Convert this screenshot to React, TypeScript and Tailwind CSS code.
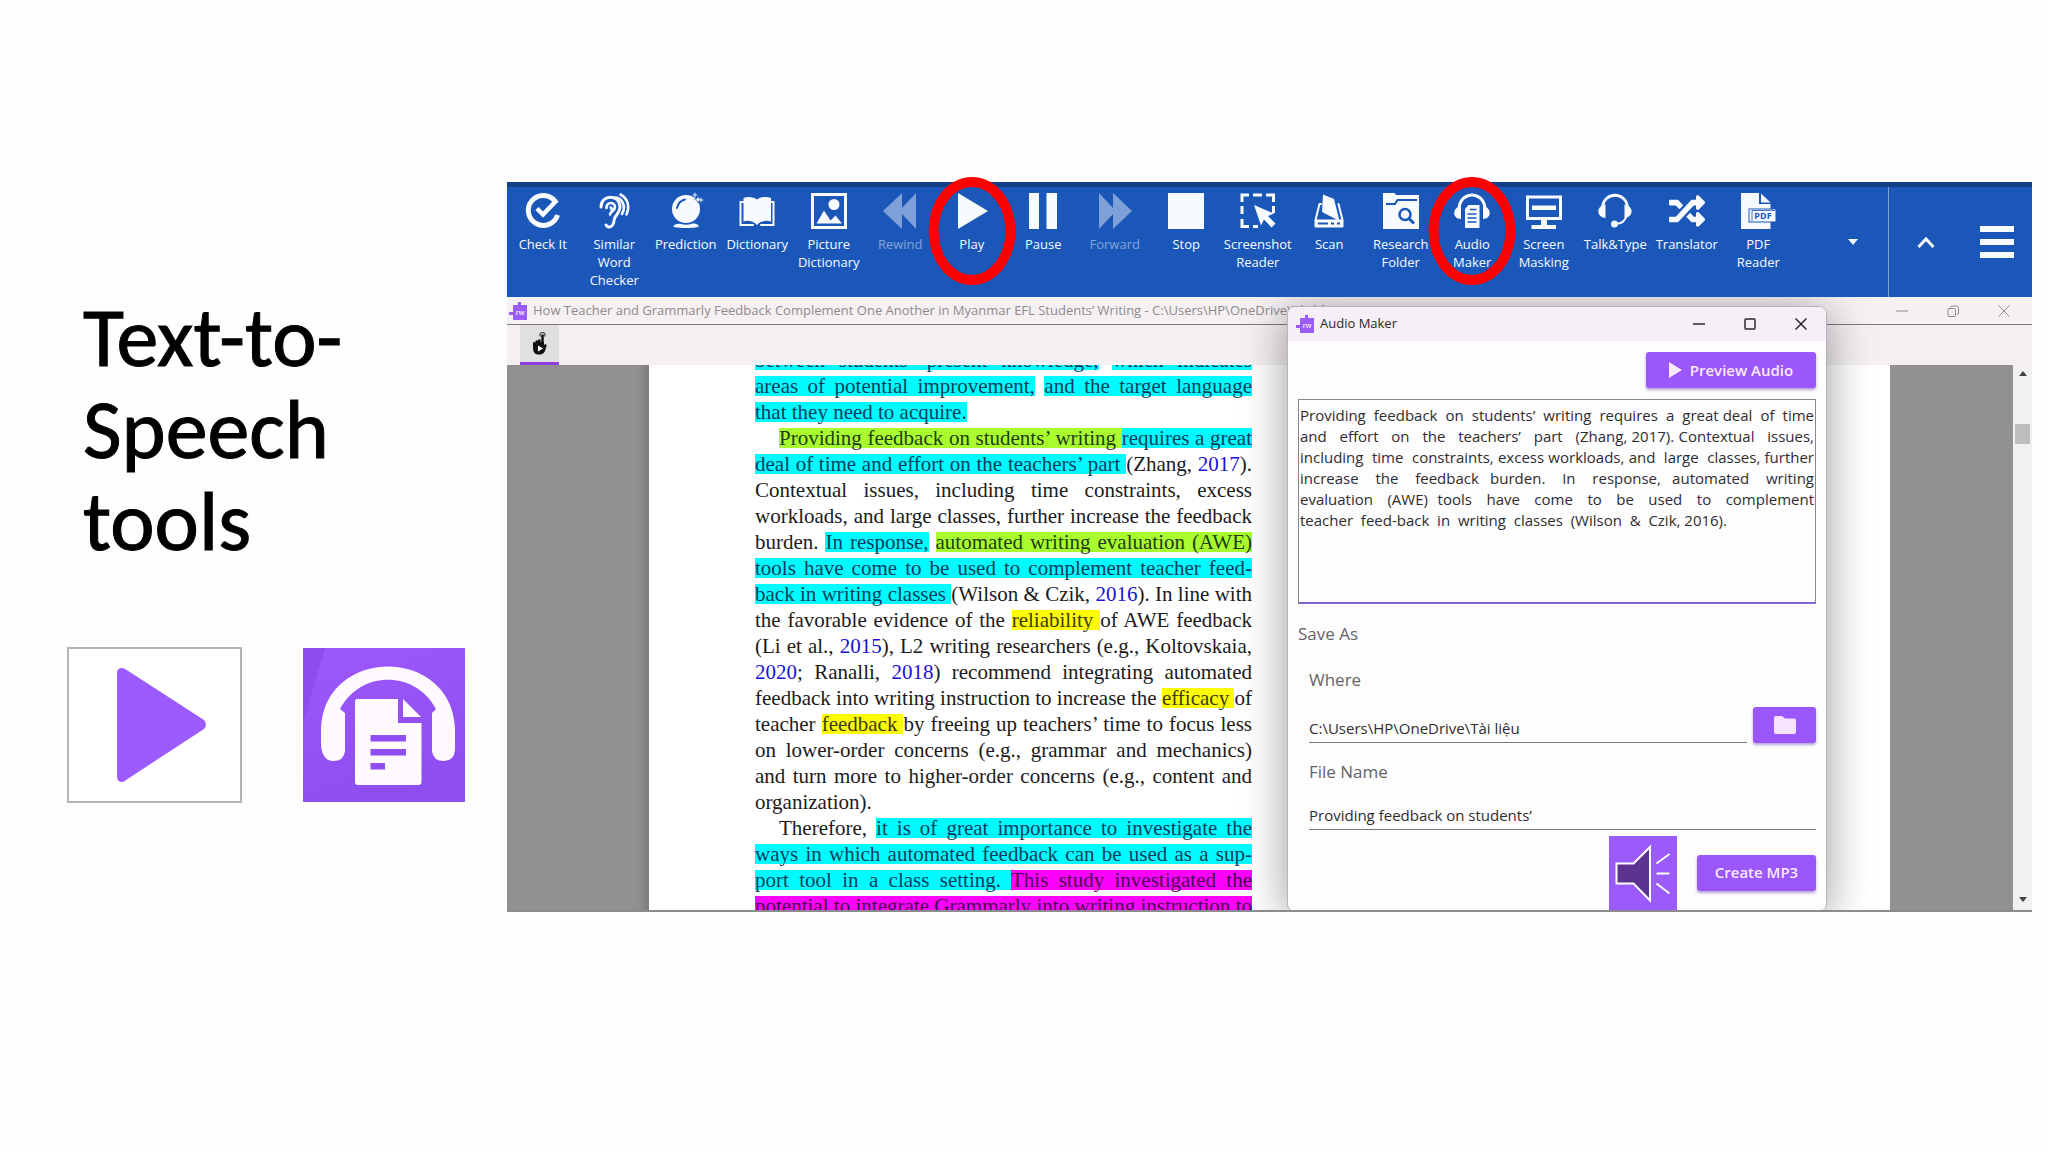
import React from "react";
import { FaRandom } from "react-icons/fa";

const BLUE = "#1b57b9";

function Svg({ children }: { children: React.ReactNode }) {
  return (
    <svg viewBox="0 0 36 36" className="size-9 shrink-0 overflow-visible" fill="#f7fbff" aria-hidden="true">
      {children}
    </svg>
  );
}

const line = { fill: "none", stroke: "#f7fbff", strokeLinecap: "round" as const, strokeLinejoin: "round" as const };

type Tool = { label: string; icon: React.ReactNode; dim?: boolean; ring?: boolean };

const tools: Tool[] = [
  {
    label: "Check\u00a0It",
    icon: (
      <Svg>
        <path d="M30 8A15 15 0 1 0 32.6 22" {...line} strokeLinecap="butt" strokeWidth={5} />
        <path d="M12 15.500l6 6L32 7" {...line} strokeLinecap="butt" strokeLinejoin="miter" strokeWidth={4.500} />
      </Svg>
    ),
  },
  {
    label: "Similar Word Checker",
    icon: (
      <Svg>
        <path d="M5 14C5 1 24 1 24 14C24 21 18.500 21.500 18 27.500C17.500 34.500 12 35.500 10 32" {...line} strokeWidth={3} />
        <path d="M10.500 15C10 8.500 19 8.500 19 14C19 18.500 14.500 17.500 14 21.500M14.500 14.500c1 0 1.500 1 1 2" {...line} strokeWidth={2.600} />
        <path d="M19 4.500C27 5 30 14 26 21M24.500 1.500C33 6 33.500 15 30.500 21.500" {...line} strokeWidth={2.600} />
      </Svg>
    ),
  },
  {
    label: "Prediction",
    icon: (
      <Svg>
        <circle cx="18" cy="16" r="14" />
        <path d="M9 15C10 10 13 7.500 17 6.500" fill="none" stroke={BLUE} strokeWidth={2} strokeLinecap="round" />
        <path d="M5 33.500c2-3 6-3 8-2.500c3 1 7 1 10 0c3-1 7-.5 8 2.500c-4 2-22 2-26 0z" />
        <path d="M30 3l1 2.500l2.500 1l-2.500 1L30 10l-1-2.500l-2.500-1l2.500-1z" stroke={BLUE} strokeWidth={0.500} />
        <path d="M27 0v4M25 2h4M33 5v4M31 7h4" {...line} strokeWidth={0.900} />
      </Svg>
    ),
  },
  {
    label: "Dictionary",
    icon: (
      <Svg>
        <path d="M5 9H1.500V32H14M31 9H34.500V32H22" {...line} strokeLinejoin="miter" strokeWidth={2} />
        <path d="M4.500 5C9 3 15 4 18 6.500C21 4 27 3 32 5V28.500C27 27 22 28 18 32C14 28 9 27 4.500 28.500z" />
      </Svg>
    ),
  },
  {
    label: "Picture Dictionary",
    icon: (
      <Svg>
        <rect x="1.500" y="1.500" width="33" height="33" {...line} strokeLinejoin="miter" strokeWidth={3} />
        <circle cx="23" cy="11.500" r="5.500" />
        <path d="M5.500 30.500L13 17.500L19.500 27.500L24.500 22.500L31 30.500z" />
      </Svg>
    ),
  },
  { label: "Rewind", dim: true, icon: <Svg><path d="M1 18L20 0V15L34 0V36L20 21V36z" /></Svg> },
  { label: "Play", ring: true, icon: <Svg><path d="M4 0L34 18L4 36z" /></Svg> },
  { label: "Pause", icon: <Svg><path d="M4 0h10v36H4zM21.500 0h10.500v36H21.500z" /></Svg> },
  { label: "Forward", dim: true, icon: <Svg><path d="M35 18L16 0V15L2 0V36L16 21V36z" /></Svg> },
  { label: "Stop", icon: <Svg><path d="M0 0h36v36H0z" /></Svg> },
  {
    label: "Screenshot Reader",
    icon: (
      <Svg>
        <path d="M2 9V2H9M26 2h7.500V9M2 26v7.500H9M13 2h9M2 13v8M33.500 13v7M13 33.500h5" {...line} strokeLinecap="butt" strokeLinejoin="miter" strokeWidth={3} />
        <path d="M14 12L34 20.500L28 23L35.500 30.500L31.500 34.500L24 26.500L21 32.500z" />
      </Svg>
    ),
  },
  {
    label: "Scan",
    icon: (
      <Svg>
        <path d="M12 1.500L23 6L28.500 28L11 19z" />
        <path d="M10 11H8.500L4.500 27v6.500H31.500V27L27.500 11" {...line} strokeWidth={2} />
        <path d="M4.500 26.500H31.500V34H4.500z" />
        <path d="M7 30.500H17M20 30.500h3M26 30.500h3" stroke={BLUE} strokeWidth={2} />
      </Svg>
    ),
  },
  {
    label: "Research Folder",
    icon: (
      <Svg>
        <path d="M0 0H11.500L13 2H36V36H0z" />
        <path d="M3 11H12L14.500 7H34" fill="none" stroke={BLUE} strokeWidth={2} />
        <circle cx="22" cy="21.500" r="5.500" fill="none" stroke={BLUE} strokeWidth={2.500} />
        <path d="M26 25.500L31 30.500" stroke={BLUE} strokeWidth={3} />
      </Svg>
    ),
  },
  {
    label: "Audio Maker",
    ring: true,
    icon: (
      <Svg>
        <path d="M5 15C7 -2.500 29 -2.500 31 15" {...line} strokeWidth={3} />
        <path d="M7 13.500V26C-2 26 -2 14 7 13.500zM29 13.500V26C38 26 38 14 29 13.500z" />
        <path d="M14.500 12H25.500V35H11V16z" />
        <path d="M16 16.500h6.500M13.500 21h9M13.500 25h9M13.500 29h9" stroke={BLUE} strokeWidth={1.600} />
      </Svg>
    ),
  },
  {
    label: "Screen Masking",
    icon: (
      <Svg>
        <rect x="1.500" y="4" width="33" height="21.500" {...line} strokeLinejoin="miter" strokeWidth={3} />
        <path d="M6 12.500H30V17H6zM15 26h6v6h9v4H5.500v-4H15z" />
      </Svg>
    ),
  },
  {
    label: "Talk&Type",
    icon: (
      <Svg>
        <path d="M5.500 15C6 -2 30 -2 30.500 15" {...line} strokeWidth={2.800} />
        <path d="M8.500 11.500V25C-1 24 -1 13 8.500 11.500zM27.500 11.500V25C37 24 37 13 27.500 11.500z" />
        <path d="M29 24C28 28 25 30.500 19 30.800" {...line} strokeWidth={2} />
        <circle cx="17.500" cy="31" r="3.500" />
      </Svg>
    ),
  },
  { label: "Translator", icon: <FaRandom className="size-9 shrink-0" aria-hidden="true" /> },
  {
    label: "PDF Reader",
    icon: (
      <Svg>
        <path d="M1 0H19V11H30.500V36H1z" />
        <path d="M21 0.500L30.500 9.500H21z" />
        <rect x="8.500" y="15.500" width="27.500" height="14" fill={BLUE} />
        <rect x="9.500" y="16.500" width="26" height="12" fill="#f7fbff" />
        <path d="M12 28V17.500H35" fill="none" stroke={BLUE} strokeWidth={0.800} />
        <text x="23" y="26" fontSize="9" fontWeight="700" textAnchor="middle" fill={BLUE} fontFamily="Open Sans, sans-serif">
          PDF
        </text>
      </Svg>
    ),
  },
];

function Toolbar() {
  return (
    <nav aria-label="Reading tools" className="flex h-[115px] border-t-[5px] border-[#123f86] bg-[#1b57b9] text-[#f7fbff]">
      <div className="flex flex-1">
        {tools.map((t) => (
          <button
            key={t.label}
            type="button"
            className={
              "relative flex flex-1 basis-0 flex-col items-center gap-1.5 pt-1.5 text-[13px] leading-[18px] " +
              (t.dim ? "*:opacity-45" : "")
            }
          >
            {t.icon}
            <span className="w-min">{t.label}</span>
            {t.ring && (
              <span className="absolute -top-2.5 left-1/2 h-[108px] w-[87px] -translate-x-1/2 rounded-[50%] border-10 border-[#fe0000]" />
            )}
          </button>
        ))}
      </div>
      <button type="button" aria-label="More tools" className="flex w-[94px] items-center justify-center pl-6">
        <svg viewBox="0 0 10 6" className="h-1.5 w-2.5" fill="currentColor"><path d="M0 0h10L5 6z" /></svg>
      </button>
      <div className="flex w-36 items-center border-l border-[#7d9fd8] pr-[18px] pl-7">
        <button type="button" aria-label="Collapse toolbar">
          <svg viewBox="0 0 18 12" className="h-3 w-[18px]" fill="none" stroke="currentColor" strokeWidth={3}><path d="M1.500 11L9 3L16.500 11" /></svg>
        </button>
        <button type="button" aria-label="Menu" className="ml-auto flex w-[34px] flex-col gap-[7px]">
          <span className="h-1.5 w-full bg-current" />
          <span className="h-1.5 w-full bg-current" />
          <span className="h-1.5 w-full bg-current" />
        </button>
      </div>
    </nav>
  );
}

function AppMark() {
  return (
    <svg viewBox="0 0 18 18" className="size-[18px] shrink-0" fill="#9a5cf5" aria-hidden="true">
      <path d="M4 3h5V0h3v3h6v15H4v-5H0v-3h4z" />
      <text x="11" y="13" fontSize="7" fontWeight="700" textAnchor="middle" fill="#e9d8ff" fontFamily="Open Sans, sans-serif">rw</text>
    </svg>
  );
}

function WindowButtons({ restored }: { restored?: boolean }) {
  const s = { fill: "none", stroke: "currentColor", strokeWidth: restored ? 1 : 1.5 };
  return (
    <div className="ml-auto flex gap-[39px]">
      <button type="button" aria-label="Minimize"><svg viewBox="0 0 12 12" className="size-3" {...s}><path d="M0 6h12" /></svg></button>
      <button type="button" aria-label="Maximize">
        <svg viewBox="0 0 12 12" className="size-3" {...s}>
          {restored ? (
            <path d="M1 4.500a1 1 0 0 1 1-1h5.500a1 1 0 0 1 1 1V10.500a1 1 0 0 1-1 1H2a1 1 0 0 1-1-1zM3.500 2.500a2 2 0 0 1 1.500-1.500h4.500a2 2 0 0 1 2 2V8a2 2 0 0 1-1.500 1.500" />
          ) : (
            <rect x="1" y="1" width="10" height="10" rx="1" />
          )}
        </svg>
      </button>
      <button type="button" aria-label="Close"><svg viewBox="0 0 12 12" className="size-3" {...s}><path d="M0.500 0.500l11 11M11.500 0.500l-11 11" /></svg></button>
    </div>
  );
}

const mark = "bg-transparent bg-no-repeat bg-[length:100%_20px] bg-[position:0_2px] ";
function C({ children }: { children: React.ReactNode }) {
  return <mark className={mark + "bg-[linear-gradient(#00fbff,#00fbff)] text-[#043e5c]"}>{children}</mark>;
}
function G({ children }: { children: React.ReactNode }) {
  return <mark className={mark + "bg-[linear-gradient(#a9fd2e,#a9fd2e)] text-[#1e3d12]"}>{children}</mark>;
}
function Y({ children }: { children: React.ReactNode }) {
  return <mark className={mark + "bg-[linear-gradient(#fdfc05,#fdfc05)] text-[#3d3b10]"}>{children}</mark>;
}
function M({ children }: { children: React.ReactNode }) {
  return <mark className={mark + "bg-[linear-gradient(#fb02fb,#fb02fb)] text-[#4c0452]"}>{children}</mark>;
}
function A({ children }: { children: React.ReactNode }) {
  return <a href="#ref" className="text-[#1a10d8]">{children}</a>;
}

const rows: { t: React.ReactNode; indent?: boolean; end?: boolean }[] = [
  { t: <><C>between students’ present knowledge,</C> <C>which indicates</C></> },
  { t: <><C>areas of potential improvement,</C> <C>and the target language</C></> },
  { t: <C>that they need to acquire.</C>, end: true },
  { t: <><G>Providing feedback on students’ writing </G><C>requires a great</C></>, indent: true },
  { t: <><C>deal of time and effort on the teachers’ part </C>(Zhang, <A>2017</A>).</> },
  { t: "Contextual issues, including time constraints, excess" },
  { t: "workloads, and large classes, further increase the feedback" },
  { t: <>burden. <C>In response,</C> <G>automated writing evaluation (AWE)</G></> },
  { t: <C>tools have come to be used to complement teacher feed-</C> },
  { t: <><C>back in writing classes </C>(Wilson &amp; Czik, <A>2016</A>). In line with</> },
  { t: <>the favorable evidence of the <Y>reliability </Y>of AWE feedback</> },
  { t: <>(Li et al., <A>2015</A>), L2 writing researchers (e.g., Koltovskaia,</> },
  { t: <><A>2020</A>; Ranalli, <A>2018</A>) recommend integrating automated</> },
  { t: <>feedback into writing instruction to increase the <Y>efficacy </Y>of</> },
  { t: <>teacher <Y>feedback </Y>by freeing up teachers’ time to focus less</> },
  { t: "on lower-order concerns (e.g., grammar and mechanics)" },
  { t: "and turn more to higher-order concerns (e.g., content and" },
  { t: "organization).", end: true },
  { t: <>Therefore, <C>it is of great importance to investigate the</C></>, indent: true },
  { t: <C>ways in which automated feedback can be used as a sup-</C> },
  { t: <><C>port tool in a class setting. </C><M>This study investigated the</M></> },
  { t: <M>potential to integrate Grammarly into writing instruction to</M> },
];

function Article() {
  return (
    <div className="flex h-[545px] overflow-hidden bg-[#929092]">
      <div className="w-[142px] shrink-0 bg-linear-to-l from-[#7c7a7c] to-[#929092] to-8%" />
      <article className="flex-1 bg-white pl-[106px] font-['Liberation_Serif',serif] text-[21px] leading-[26px] text-[#1c1a1c]">
        <div className="-mt-[18px] w-[497px]">
          {rows.map((r, i) => (
            <p
              key={i}
              className={
                "whitespace-nowrap " + (r.end ? "text-left " : "text-justify [text-align-last:justify] ") + (r.indent ? "pl-6" : "")
              }
            >
              {r.t}
            </p>
          ))}
        </div>
      </article>
      <div className="w-[123px] shrink-0" />
      <div className="flex w-[19px] shrink-0 flex-col items-center bg-[#f3f0f3] py-1 text-[#444]">
        <svg viewBox="0 0 8 5" className="mt-0.5 h-[5px] w-2" fill="currentColor"><path d="M0 5h8L4 0z" /></svg>
        <span className="mt-12 h-5 w-[15px] bg-[#bfbcbf]" />
        <svg viewBox="0 0 8 5" className="mt-auto mb-1 h-[5px] w-2" fill="currentColor"><path d="M0 0h8L4 5z" /></svg>
      </div>
    </div>
  );
}

const audioText =
  "Providing  feedback  on  students’  writing  requires  a  great deal  of  time " +
  "and   effort   on   the   teachers’   part   (Zhang, 2017). Contextual   issues, " +
  "including  time  constraints, excess workloads, and  large  classes, further " +
  "increase   the   feedback  burden.   In   response,  automated   writing " +
  "evaluation   (AWE)  tools   have   come   to   be   used   to   complement " +
  "teacher  feed-back  in  writing  classes  (Wilson  &  Czik, 2016).";

const purpleButton = "flex h-9 items-center justify-center rounded-[3px] bg-[#9b57fb] font-semibold text-[#fbeaff] shadow-[0_2px_3px_rgba(90,50,160,0.45)] ";

function AudioDialog() {
  return (
    <section
      role="dialog"
      aria-label="Audio Maker"
      className="absolute top-[9px] right-[205px] w-[540px] overflow-hidden rounded-lg border border-[#b9b4ba] bg-[#fefdfe] shadow-[0_6px_45px_rgba(0,0,0,0.4)]"
    >
      <header className="flex h-[34px] items-center gap-1.5 bg-[#f7eff8] pr-[19px] pl-2 text-[13px] text-[#2a262b]">
        <AppMark />
        <h2>Audio Maker</h2>
        <WindowButtons />
      </header>
      <div className="flex flex-col px-2.5">
        <button type="button" className={purpleButton + "mt-[11px] w-[170px] gap-2 self-end text-[15px]"}>
          <svg viewBox="0 0 13 16" className="h-4 w-[13px]" fill="currentColor" aria-hidden="true"><path d="M0 0L13 8L0 16z" /></svg>
          Preview Audio
        </button>
        <textarea
          aria-label="Text to convert"
          defaultValue={audioText}
          className="mt-[11px] block h-[205px] w-full resize-none overflow-hidden border border-b-2 border-[#8a868c] border-b-[#8366cf] bg-transparent px-px pt-[5px] text-justify text-[15px] leading-[21px] text-[#2f2c30] outline-none"
        />
        <h3 className="mt-[18px] text-[17px] leading-6 text-[#666267]">Save As</h3>
        <div className="mt-[22px] flex flex-col pl-[11px]">
          <label htmlFor="where" className="text-[17px] leading-6 text-[#666267]">Where</label>
          <div className="mt-[15px] flex items-start gap-1.5">
            <input
              id="where"
              defaultValue={"C:\\Users\\HP\\OneDrive\\Tài liệu"}
              className="h-9 min-w-0 flex-1 border-b border-[#77737a] bg-transparent pt-1.5 text-[15px] text-[#2f2c30] outline-none"
            />
            <button type="button" aria-label="Choose folder" className={purpleButton + "w-[63px]"}>
              <svg viewBox="0 0 22 18" className="h-[18px] w-[22px]" fill="#f6e4ff"><path d="M2 0h6l3 2.500h9a2 2 0 0 1 2 2V16a2 2 0 0 1-2 2H2a2 2 0 0 1-2-2V2a2 2 0 0 1 2-2z" /></svg>
            </button>
          </div>
          <label htmlFor="fname" className="mt-[17px] text-[17px] leading-6 text-[#666267]">File Name</label>
          <input
            id="fname"
            defaultValue="Providing feedback on students’"
            className="mt-[15px] h-[31px] border-b border-[#77737a] bg-transparent pt-0.5 text-[15px] text-[#2f2c30] outline-none"
          />
        </div>
        <div className="mt-1 flex items-center justify-end gap-5">
          <button type="button" aria-label="Play narration" className="mt-0.5 block h-[75px] w-[68px] bg-[#9b5bfb]">
            <svg viewBox="0 0 68 75" className="h-[75px] w-[68px]" aria-hidden="true">
              <path d="M7.500 27.500H24.500L41 11V64.500L24.500 47.500H7.500z" fill="#5c3390" stroke="#fff" strokeWidth={2} />
              <path d="M47.500 27.500L60.500 18M47.500 37.500H60.500M47.500 47.500L60.500 57.500" stroke="#fff" strokeWidth={2} />
            </svg>
          </button>
          <button type="button" className={purpleButton + "w-[119px] text-[15px]"}>Create MP3</button>
        </div>
      </div>
    </section>
  );
}

function DocumentWindow() {
  return (
    <section className="relative overflow-hidden border-b-2 border-[#8d8b8d] bg-[#f3eff3]">
      <header className="flex h-7 items-center gap-1.5 border-b border-[#7d7a7d] bg-[#f5f1f2] pr-[22px] pl-0.5 text-[13px] text-[#8f898e]">
        <AppMark />
        <h1 className="whitespace-nowrap">
          How Teacher and Grammarly Feedback Complement One Another in Myanmar EFL Students’ Writing - C:\Users\HP\OneDrive\Tài liệu
        </h1>
        <WindowButtons restored />
      </header>
      <div className="flex h-10 pl-[13px]">
        <button type="button" aria-label="Click to read" className="flex w-[39px] items-center justify-center border-b-[3px] border-[#8b3fe0] bg-[#e2dfe3]">
          <svg viewBox="0 0 16 24" className="h-6 w-4" aria-hidden="true">
            <path d="M10.500 11V3.500" stroke="#111" strokeWidth={2.500} strokeLinecap="round" />
            <path d="M8.500 4.500a2.500 2.500 0 1 1 4 0" fill="none" stroke="#444" strokeWidth={1.200} />
            <path d="M1 11.500a1.200 1.200 0 0 1 2.400-.5V9.500a1.300 1.300 0 0 1 2.600 0V8.500a1.300 1.300 0 0 1 2.600 0V10H12V13L13.500 12q1.500.5 1 2L13 19q-1 3-4 3.500H5.500Q1.500 22 1 17z" fill="#111" />
            <path d="M6 13.500l5 3-5 3z" fill="#fff" />
          </svg>
        </button>
      </div>
      <Article />
      <AudioDialog />
    </section>
  );
}

function SlideAside() {
  return (
    <aside className="w-[507px] shrink-0">
      <h1 className="mt-[110px] ml-[83px] w-[320px] font-['Carlito','Lato',sans-serif] text-[84px] leading-[92px] text-black [-webkit-text-stroke:1px_black]">
        Text-to-
        <br />
        Speech
        <br />
        tools
      </h1>
      <div className="mt-[79px] ml-[67px] flex items-center gap-[61px]">
        <button type="button" aria-label="Play" className="flex h-[156px] w-[175px] items-center justify-center border-2 border-[#b5b3b5] bg-white pl-4">
          <svg viewBox="0 0 91 114" className="h-[114px] w-[91px]" fill="#9b5bff">
            <path d="M0 5Q0 0 5 0Q7 0 9 1.500L87 52Q91 56.500 87 61L9 112Q7 114 5 114Q0 114 0 108z" />
          </svg>
        </button>
        <button type="button" aria-label="Audio Maker" className="h-[154px] w-[162px]">
          <svg viewBox="0 0 162 154" className="h-[154px] w-[162px]">
            <defs>
              <linearGradient id="tile" x1="0" y1="0" x2="0.3" y2="1">
                <stop offset="0" stopColor="#9c58fb" />
                <stop offset="1" stopColor="#8f4ef2" />
              </linearGradient>
            </defs>
            <path d="M0 0h162v154H0z" fill="url(#tile)" />
            <path d="M0 0h22L0 75z" fill="#8d4cf0" />
            <g fill="#fffaff">
              <path d="M18 80C22 -2 148 -2 152 80V102Q151 113 141 113Q130 113 129 103V65L133 61C112 22 58 22 37 61L42 65V103Q41 113 30 113Q20 113 18 98z" />
              <path d="M54 51H95V75H118.500V134Q118.500 137 115 137H55Q52 137 52 134V54Q52 51 54 51z" />
              <path d="M100 51L118 69H100z" />
            </g>
            <path d="M67.500 87H103V93.500H67.500zM67.500 101H103V107.500H67.500zM67.500 115H82V121.500H67.500z" fill="#8f4ff0" />
          </svg>
        </button>
      </div>
    </aside>
  );
}

export default function App() {
  return (
    <main className="flex min-h-screen items-start bg-[#fefefe] pt-[182px] pr-4 font-['Open_Sans','Noto_Sans',sans-serif]">
      <SlideAside />
      <div className="min-w-0 flex-1">
        <Toolbar />
        <DocumentWindow />
      </div>
    </main>
  );
}
